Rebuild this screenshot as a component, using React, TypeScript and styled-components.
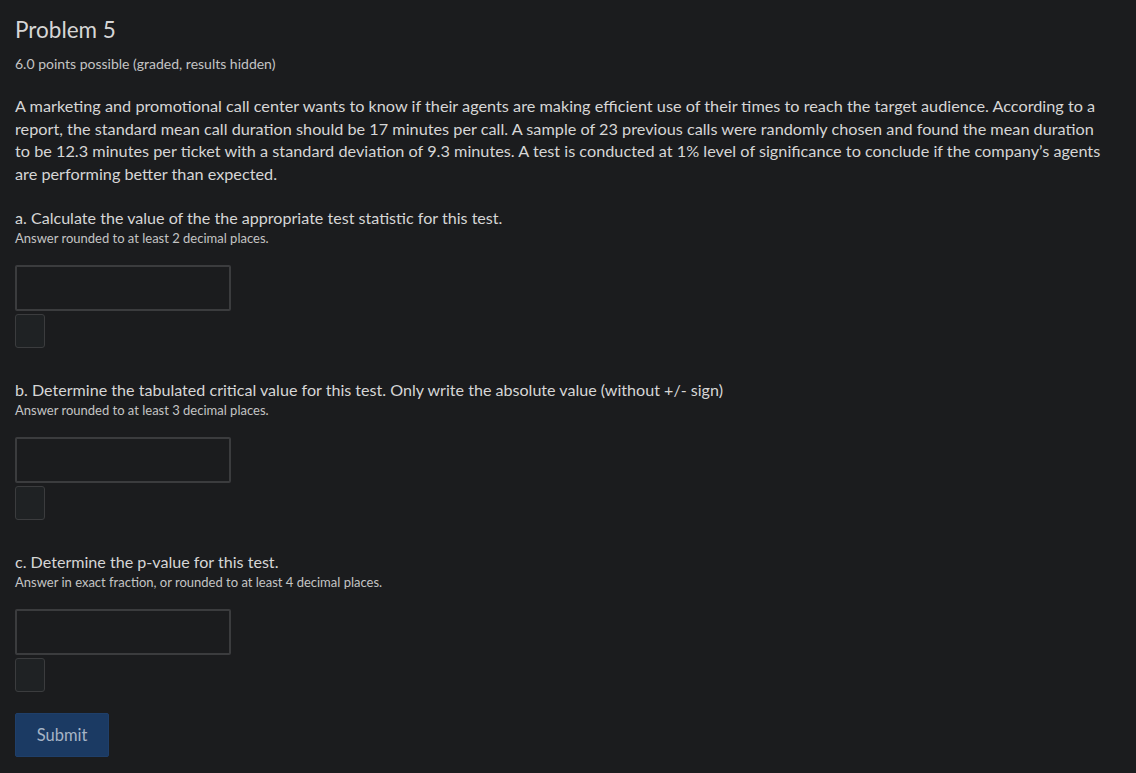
import * as React from 'react';
import styled, { createGlobalStyle } from 'styled-components';

const GlobalStyle = createGlobalStyle`
    html, body {
        margin: 0;
        padding: 0;
        background: #1b1c1e;
    }
    body {
        font-family: Lato, "Open Sans", "Liberation Sans", sans-serif;
        color: #d3d3d3;
    }
`;

const Page = styled.main`
    padding: 16px 15px 0;
    min-height: 773px;
    box-sizing: border-box;
`;

const Title = styled.h2`
    margin: 0;
    font-size: 22.5px;
    font-weight: 400;
    line-height: 28px;
    color: #d6d6d6;
`;

const Meta = styled.div`
    margin-top: 10px;
    font-size: 14px;
    line-height: 20px;
    color: #c4c4c4;
`;

const Prompt = styled.p`
    margin: 21px 0 0;
    font-size: 16.25px;
    line-height: 22.5px;
    color: #d6d6d6;
    max-width: 1090px;
`;

const Part = styled.section<{ $first?: boolean }>`
    margin-top: ${({ $first }) => ($first ? '23px' : '32px')};
`;

const Question = styled.div`
    font-size: 16.1px;
    line-height: 20px;
    color: #d6d6d6;
`;

const Hint = styled.div`
    font-size: 13px;
    line-height: 20px;
    color: #c4c4c4;
`;

const AnswerInput = styled.input`
    display: block;
    margin-top: 17px;
    width: 216px;
    height: 46px;
    box-sizing: border-box;
    background: #1b1c1e;
    border: 2px solid #3b3c3e;
    border-radius: 2px;
    color: #d6d6d6;
    font: inherit;
    padding: 0 8px;
    outline: none;
`;

const StatusBox = styled.div`
    margin-top: 3px;
    width: 30px;
    height: 34px;
    box-sizing: border-box;
    background: #1f2224;
    border: 1px solid #3b3c3e;
    border-radius: 3px;
`;

const SubmitButton = styled.button`
    margin-top: 21px;
    width: 94px;
    height: 44px;
    background: #1b3a63;
    border: 1px solid #1f3f6a;
    border-radius: 2px;
    color: #a6b4c6;
    font-family: inherit;
    font-size: 16.5px;
    cursor: pointer;
`;

const parts = [
    {
        label: 'a. Calculate the value of the the appropriate test statistic for this test.',
        hint: 'Answer rounded to at least 2 decimal places.'
    },
    {
        label: 'b. Determine the tabulated critical value for this test. Only write the absolute value (without +/- sign)',
        hint: 'Answer rounded to at least 3 decimal places.'
    },
    {
        label: 'c. Determine the p-value for this test.',
        hint: 'Answer in exact fraction, or rounded to at least 4 decimal places.'
    }
];

const App = () => {
    const [answers, setAnswers] = React.useState(['', '', '']);

    return (
        <>
            <GlobalStyle />
            <Page>
                <Title>Problem 5</Title>
                <Meta>6.0 points possible (graded, results hidden)</Meta>
                <Prompt>
                    A marketing and promotional call center wants to know if their agents are making efficient use of
                    their times to reach the target audience. According to a report, the standard mean call duration
                    should be 17 minutes per call. A sample of 23 previous calls were randomly chosen and found the mean
                    duration to be 12.3 minutes per ticket with a standard deviation of 9.3 minutes. A test is conducted
                    at 1% level of significance to conclude if the company’s agents are performing better than expected.
                </Prompt>
                {parts.map((p, i) => (
                    <Part key={i} $first={i === 0}>
                        <Question>{p.label}</Question>
                        <Hint>{p.hint}</Hint>
                        <AnswerInput
                            type="text"
                            value={answers[i]}
                            onChange={e => {
                                const next = [...answers];
                                next[i] = e.target.value;
                                setAnswers(next);
                            }}
                        />
                        <StatusBox />
                    </Part>
                ))}
                <SubmitButton>Submit</SubmitButton>
            </Page>
        </>
    );
};

export default App;
